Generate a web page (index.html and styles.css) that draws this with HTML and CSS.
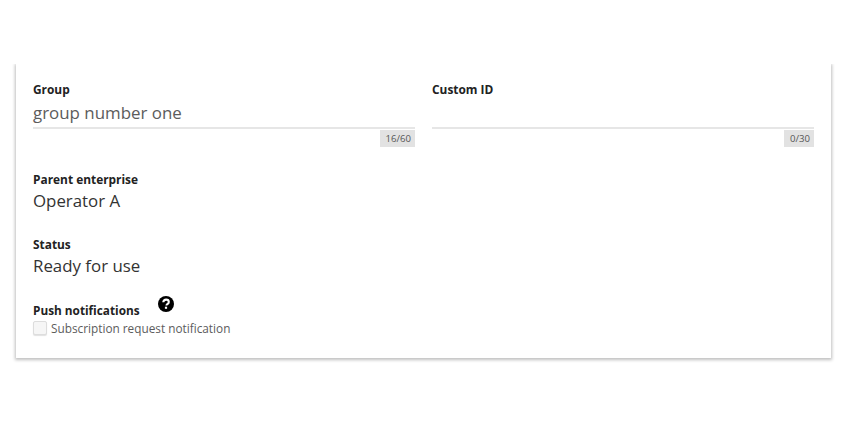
FILE: index.html
```html
<!DOCTYPE html>
<html lang="en">
  <head>
    <meta charset="UTF-8" />
    <meta name="viewport" content="width=device-width, initial-scale=1.0" />
    <title>Group</title>
    <link rel="stylesheet" href="styles.css">
  </head>
  <body>
    <div class="card">
      <div class="field-row">
        <div class="input-field">
          <div class="label">Group</div>
          <div class="input-value">group number one</div>
          <div class="counter-row"><span class="counter">16/60</span></div>
        </div>
        <div class="input-field">
          <div class="label">Custom ID</div>
          <div class="input-value"></div>
          <div class="counter-row"><span class="counter">0/30</span></div>
        </div>
      </div>

      <div class="info info-parent">
        <div class="label">Parent enterprise</div>
        <div class="info-value">Operator A</div>
      </div>

      <div class="info info-status">
        <div class="label">Status</div>
        <div class="info-value">Ready for use</div>
      </div>

      <div class="push">
        <div class="push-title">
          <span class="label">Push notifications</span>
          <svg class="help-icon" viewBox="0 0 16 16" width="16" height="16" aria-hidden="true">
            <circle cx="8" cy="8" r="8" fill="#000" />
            <path d="M5.3 6.2c0-1.6 1.2-2.6 2.8-2.6s2.7 1 2.7 2.3c0 1-.6 1.6-1.4 2.1-.6.4-.9.7-.9 1.4" fill="none" stroke="#fff" stroke-width="2.1" />
            <rect x="6.9" y="10.7" width="2.2" height="2.1" fill="#fff" />
          </svg>
        </div>
        <label class="check">
          <input type="checkbox" />
          <span class="check-box"></span>
          Subscription request notification
        </label>
      </div>
    </div>
  </body>
</html>
```

FILE: styles.css
```css
html,
body {
  height: 429px;
  overflow: hidden;
}
body {
  margin: 0;
  padding: 64px 14px 0 16px;
  box-sizing: border-box;
  background-color: white;
  font-family: "Open Sans", sans-serif;
  color: #222;
}
.card {
  height: 294px;
  box-sizing: border-box;
  padding: 17px 17px 0 17px;
  background-color: white;
  box-shadow: 0 1px 3px 1px rgba(0, 0, 0, 0.25);
  clip-path: inset(0 -8px -8px -8px);
}
.field-row {
  display: grid;
  grid-template-columns: 382px 382px;
  column-gap: 17px;
}
.label {
  font-size: 11.9px;
  font-weight: 700;
  line-height: 17px;
  color: #222;
}
.input-value {
  height: 29px;
  font-size: 16.9px;
  line-height: 29px;
  color: #5c5c5c;
  border-bottom: 2px solid #e6e6e6;
}
.counter-row {
  display: flex;
  justify-content: flex-end;
}
.counter {
  margin-top: 1px;
  padding: 0 4px 0 6px;
  background-color: #e2e2e2;
  font-size: 9.6px;
  line-height: 17px;
  color: #555;
}
.info-value {
  font-size: 16.85px;
  line-height: 26px;
  color: #333;
}
.info-parent {
  margin-top: 24px;
}
.info-status {
  margin-top: 22px;
}
.push {
  margin-top: 16px;
}
.push-title {
  display: flex;
  align-items: flex-end;
  gap: 18px;
  height: 24px;
}
.push-title .label {
  font-size: 11.8px;
}
.help-icon {
  margin-bottom: 7px;
}
.check {
  display: flex;
  align-items: center;
  height: 18px;
  gap: 4px;
  font-size: 11.8px;
  color: #5c5c5c;
}
.check input {
  display: none;
}
.check-box {
  width: 12px;
  height: 12px;
  border: 1px solid #ddd;
  border-radius: 2px;
  background-color: #f6f6f6;
  box-shadow: 0 1px 1px rgba(0, 0, 0, 0.12);
}
```
